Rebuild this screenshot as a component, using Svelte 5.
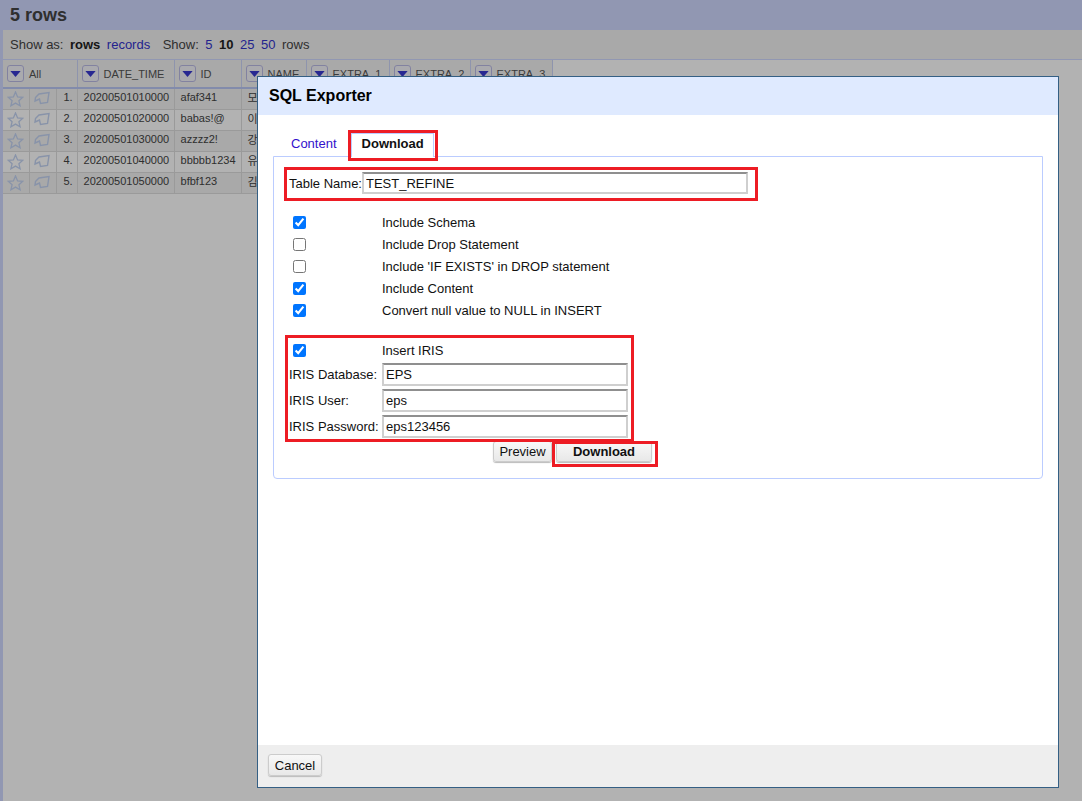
<script>
  const cols = ['DATE_TIME', 'ID', 'NAME', 'EXTRA_1', 'EXTRA_2', 'EXTRA_3'];
  const rows = [
    ['20200501010000', 'afaf341', '모'],
    ['20200501020000', 'babas!@', '이'],
    ['20200501030000', 'azzzz2!', '강'],
    ['20200501040000', 'bbbbb1234', '유'],
    ['20200501050000', 'bfbf123', '김']
  ];
  const options = [
    ['Include Schema', true],
    ['Include Drop Statement', false],
    ["Include 'IF EXISTS' in DROP statement", false],
    ['Include Content', true],
    ['Convert null value to NULL in INSERT', true]
  ];
  const iris = [
    ['IRIS Database:', 'EPS'],
    ['IRIS User:', 'eps'],
    ['IRIS Password:', 'eps123456']
  ];
</script>

{#snippet arrow()}
  <span class="drop"><svg width="12" height="7" viewBox="0 0 12 7"><path d="M0 0h12L6 7z" fill="#3a3ad0" /></svg></span>
{/snippet}

<div class="page">
  <div class="titlebar">5 rows</div>
  <div class="view">
    <div class="controls">
      <span>Show as:</span>
      <b class="first">rows</b><a class="link">records</a>
      <span class="show">Show:</span>
      <a class="link">5</a><b>10</b><a class="link">25</a><a class="link">50</a><span>rows</span>
    </div>
    <table>
      <colgroup>
        <col style="width:26px" /><col style="width:27px" /><col style="width:21px" />
        <col style="width:97px" /><col style="width:67px" /><col style="width:65px" />
        <col style="width:83px" /><col style="width:81px" /><col style="width:82px" />
      </colgroup>
      <thead>
        <tr>
          <th colspan="3"><div class="hd">{@render arrow()}<span>All</span></div></th>
          {#each cols as c}
            <th><div class="hd">{@render arrow()}<span>{c}</span></div></th>
          {/each}
        </tr>
      </thead>
      <tbody>
        {#each rows as r, i}
          <tr class:odd={i % 2 === 0}>
            <td class="ic">
              <svg width="17" height="16" viewBox="0 0 17 16"><path d="M8.500 1l2.100 4.900 5.200.4-3.900 3.400 1.200 5.100-4.600-2.700-4.600 2.700 1.200-5.100-3.900-3.400 5.200-.4z" fill="none" stroke="#c3d3f2" stroke-width="1.300" /></svg>
            </td>
            <td class="ic">
              <svg width="17" height="16" viewBox="0 0 17 16"><path d="M1.500 6.500l3.500-3.500 10-1.500-1.500 10-7 1-1-4.500-4.500 2z" fill="none" stroke="#c3d3f2" stroke-width="1.400" /></svg>
            </td>
            <td class="num">{i + 1}.</td>
            <td>{r[0]}</td>
            <td>{r[1]}</td>
            <td>{r[2]}</td>
            <td></td><td></td><td></td>
          </tr>
        {/each}
      </tbody>
    </table>
  </div>

  <div class="overlay"></div>

  <div class="dialog">
    <div class="dhead">SQL Exporter</div>
    <div class="dbody">
      <div class="tabs">
        <a class="tab">Content</a>
        <span class="tab active">Download</span>
      </div>
      <div class="panel">
        <div class="tablename">
          <label for="tn">Table Name:</label>
          <input id="tn" value="TEST_REFINE" />
        </div>
        <div class="opts">
          {#each options as o}
            <div class="opt"><span class="cb"><input type="checkbox" checked={o[1]} /></span><span>{o[0]}</span></div>
          {/each}
        </div>
        <div class="irisblock">
          <div class="opt iris1"><span class="cb"><input type="checkbox" checked /></span><span>Insert IRIS</span></div>
          {#each iris as f}
            <div class="field"><span class="flabel">{f[0]}</span><input value={f[1]} /></div>
          {/each}
        </div>
        <div class="actions">
          <button class="pv">Preview</button><button class="dl">Download</button>
        </div>
      </div>
    </div>
    <div class="dfoot"><button>Cancel</button></div>

    <div class="mark m-tab"></div>
    <div class="mark m-name"></div>
    <div class="mark m-iris"></div>
    <div class="mark m-dl"></div>
  </div>
</div>

<style>
  :global(body) {
    margin: 0;
    background: #fff;
    font-family: "Liberation Sans", Arial, "Noto Sans CJK KR", sans-serif;
    color: #222;
  }
  .page {
    position: relative;
    width: 1082px;
    height: 801px;
    overflow: hidden;
    background: #d0d8ff;
  }
  .titlebar {
    height: 30px;
    line-height: 31px;
    padding-left: 10px;
    font-size: 18px;
    font-weight: bold;
    color: #444;
    box-sizing: border-box;
  }
  .view {
    margin-left: 3px;
    height: 771px;
    background: #fff;
  }
  .controls {
    height: 30px;
    box-sizing: border-box;
    padding-left: 7px;
    background: #f2f2f2;
    display: flex;
    align-items: center;
    font-size: 13px;
    gap: 6.500px;
    color: #444;
    border-bottom: 1px solid #d0d8ff;
  }
  .controls b { color: #222; }
  .controls .show { margin-left: 6px; }
  .link { color: #3333cc; }
  table {
    border-collapse: collapse;
    table-layout: fixed;
    width: 549px;
    font-size: 11px;
    color: #444;
  }
  th {
    height: 27px;
    padding: 0;
    background: #f2f2f2;
    border-right: 1px solid #ccd5f8;
    border-bottom: 2px solid #bbc8f5;
    text-align: left;
    font-weight: normal;
  }
  .hd {
    display: flex;
    align-items: center;
    gap: 5px;
    padding-left: 4px;
    font-size: 11px;
    color: #555;
  }
  .drop {
    width: 15px;
    height: 15px;
    border: 1px solid #bbbbe6;
    border-radius: 3px;
    display: flex;
    align-items: center;
    justify-content: center;
    background: #f4f4fa;
  }
  .drop svg { width: 11px; height: 6px; }
  td {
    padding: 0 0 3px 6px;
    box-sizing: border-box;
    height: 21px;
    border-right: 1px solid #ddd;
    border-bottom: 1px solid #ddd;
    white-space: nowrap;
    overflow: hidden;
  }
  tr.odd td { background: #f2f2f2; }
  td.ic { padding: 0 0 0 4px; line-height: 0; }
  td.num { padding-left: 7px; }
  .overlay {
    position: absolute;
    inset: 0;
    background: rgba(0, 0, 0, 0.3);
  }
  .dialog {
    position: absolute;
    left: 257px;
    top: 76px;
    width: 802px;
    height: 712px;
    box-sizing: border-box;
    background: #fff;
    border: 1px solid #345f84;
    display: flex;
    flex-direction: column;
    font-size: 13px;
    color: #111;
  }
  .dhead {
    height: 38px;
    line-height: 38px;
    padding-left: 11px;
    font-size: 16px;
    font-weight: bold;
    background: #dfeaff;
    color: #000;
    flex: none;
  }
  .dbody {
    flex: 1;
    padding: 18px 15px 0;
  }
  .tabs {
    display: flex;
    height: 23px;
    padding-left: 4px;
    position: relative;
    z-index: 1;
  }
  .tab {
    padding: 0 14px;
    line-height: 21px;
    color: #3311cc;
    height: 23px;
  }
  .tab.active {
    color: #111;
    font-weight: bold;
    padding: 0 10px;
    margin-left: 0;
    box-sizing: border-box;
    width: 83px;
    background: #fff;
    border: 1px solid #bbccff;
    border-bottom: none;
    height: 24px;
    line-height: 19px;
  }
  .panel {
    box-sizing: border-box;
    height: 323px;
    border: 1px solid #bbccff;
    border-radius: 0 0 4px 4px;
    padding: 15px 15px 0 15px;
  }
  .tablename {
    display: flex;
    align-items: center;
    height: 23px;
  }
  .tablename label { margin-top: -1px; }
  .tablename input {
    width: 386px;
    height: 22px;
    align-self: flex-start;
  }
  input:not([type="checkbox"]) {
    box-sizing: border-box;
    font: 13px "Liberation Sans", Arial, sans-serif;
    padding: 1px 2px;
    color: #111;
    margin: 0;
    border: 2px solid #cfcfcf;
    border-top-color: #8f8f8f;
    background: #fff;
  }
  .opts { margin-top: 16px; }
  .opt {
    display: flex;
    align-items: center;
    height: 22px;
  }
  .cb {
    width: 93px;
    flex: none;
    padding-left: 4px;
    box-sizing: border-box;
    display: flex;
  }
  .cb input { margin: 0; width: 13px; height: 13px; }
  .irisblock { margin-top: 16px; }
  .iris1 { height: 26px; }
  .field {
    display: flex;
    align-items: center;
    height: 23px;
    margin-bottom: 3px;
  }
  .flabel { width: 93px; flex: none; }
  .field input { width: 246px; height: 23px; }
  .actions {
    display: flex;
    gap: 4px;
    margin-top: 0;
    padding-left: 204px;
  }
  button {
    height: 21px;
    box-sizing: border-box;
    padding: 0;
    font: 13px "Liberation Sans", Arial, sans-serif;
    color: #111;
    border: 1px solid #ccc;
    border-radius: 3px;
    background: linear-gradient(#f8f8f8, #e8e8e8);
    box-shadow: 0 1px 1px #bbb;
  }
  button.pv { width: 59px; }
  button.dl { font-weight: bold; width: 96px; }
  .dfoot {
    height: 42px;
    flex: none;
    background: #eee;
    padding: 9px 10px;
    box-sizing: border-box;
  }
  .dfoot button { height: 22px; width: 54px; }
  .mark {
    position: absolute;
    border: 3px solid #ed1c24;
    box-sizing: border-box;
    pointer-events: none;
  }
  .m-tab { left: 90px; top: 53px; width: 90px; height: 31px; }
  .m-name { left: 26px; top: 90px; width: 474px; height: 34px; }
  .m-iris { left: 27px; top: 258px; width: 349px; height: 107px; }
  .m-dl { left: 294px; top: 364px; width: 106px; height: 26px; }
</style>
